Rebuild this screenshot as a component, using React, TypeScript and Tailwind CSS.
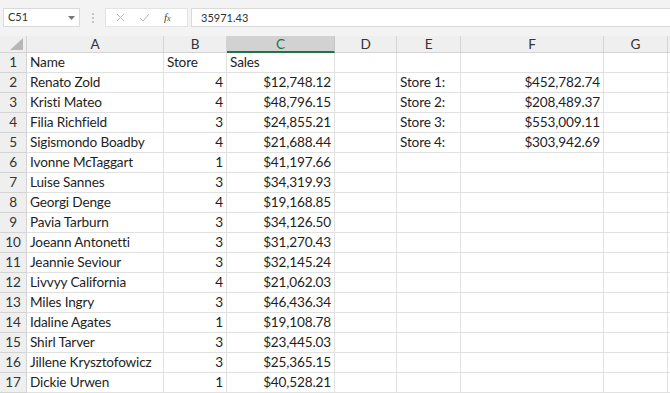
import React from 'react';

const rows: [string, number, string][] = [
  ['Renato Zold', 4, '$12,748.12'],
  ['Kristi Mateo', 4, '$48,796.15'],
  ['Filia Richfield', 3, '$24,855.21'],
  ['Sigismondo Boadby', 4, '$21,688.44'],
  ['Ivonne McTaggart', 1, '$41,197.66'],
  ['Luise Sannes', 3, '$34,319.93'],
  ['Georgi Denge', 4, '$19,168.85'],
  ['Pavia Tarburn', 3, '$34,126.50'],
  ['Joeann Antonetti', 3, '$31,270.43'],
  ['Jeannie Seviour', 3, '$32,145.24'],
  ['Livvyy California', 4, '$21,062.03'],
  ['Miles Ingry', 3, '$46,436.34'],
  ['Idaline Agates', 1, '$19,108.78'],
  ['Shirl Tarver', 3, '$23,445.03'],
  ['Jillene Krysztofowicz', 3, '$25,365.15'],
  ['Dickie Urwen', 1, '$40,528.21'],
];

const totals: Record<number, [string, string]> = {
  2: ['Store 1:', '$452,782.74'],
  3: ['Store 2:', '$208,489.37'],
  4: ['Store 3:', '$553,009.11'],
  5: ['Store 4:', '$303,942.69'],
};

const cols = ['A', 'B', 'C', 'D', 'E', 'F', 'G'];
const gridCols = 'grid grid-cols-[27px_137px_63px_108px_62px_64px_143px_64px_1fr]';

function Cell({ children, right }: { children?: React.ReactNode; right?: boolean }) {
  return (
    <div
      className={`h-5 border-r border-b border-[#e1e1e1] px-[3px] leading-[19px] whitespace-nowrap overflow-hidden ${
        right ? 'text-right' : ''
      }`}
    >
      {children}
    </div>
  );
}

function RowHead({ n }: { n: number }) {
  return (
    <div className="h-5 bg-[#efefef] border-r border-b border-[#d4d4d4] text-center leading-[19px] text-[#333]">
      {n}
    </div>
  );
}

export default function App() {
  return (
    <div
      className="w-[670px] h-[393px] overflow-hidden bg-white text-[13.6px] tracking-[-0.15px] text-[#1e1e1e]"
      style={{ fontFamily: 'Lato, "Open Sans", sans-serif' }}
    >
      {/* formula bar */}
      <div className="h-9 bg-[#f3f3f3] flex items-start pt-2 pl-[3px] gap-0 tracking-normal">
        <div className="w-[77px] h-[19px] bg-white border border-[#dadada] flex items-center justify-between pl-[4px] pr-[4px] text-[11px] text-[#333]">
          <span>C51</span>
          <svg width="7" height="4" viewBox="0 0 7 4">
            <path d="M0 0h7L3.5 4z" fill="#777" />
          </svg>
        </div>
        <div className="w-[25px] h-[19px] flex flex-col items-center justify-center gap-[2px]">
          <span className="w-[2px] h-[2px] bg-[#c4c4c4]" />
          <span className="w-[2px] h-[2px] bg-[#c4c4c4]" />
          <span className="w-[2px] h-[2px] bg-[#c4c4c4]" />
        </div>
        <div className="w-[83px] h-[19px] bg-white border border-[#e3e3e3] flex items-center pl-[10px] gap-[14px]">
          <svg width="9" height="9" viewBox="0 0 9 9">
            <path d="M1 1l7 7M8 1l-7 7" stroke="#b9b9b9" strokeWidth="1" />
          </svg>
          <svg width="11" height="9" viewBox="0 0 11 9">
            <path d="M1 5l3 3 6-7" stroke="#b9b9b9" strokeWidth="1" fill="none" />
          </svg>
          <span className="text-[11px] italic text-[#444]" style={{ fontFamily: '"Liberation Serif", serif' }}>
            f<span className="text-[8px]">x</span>
          </span>
        </div>
        <div className="flex-1 ml-[3px] h-[19px] bg-white border-y border-l border-[#dadada] pl-[9px] text-[11px] leading-[17px] text-[#333]">
          35971.43
        </div>
      </div>

      {/* column headers */}
      <div className={gridCols}>
        <div className="h-[17px] bg-[#efefef] border-r border-b border-[#d4d4d4] relative">
          <svg className="absolute right-[3px] bottom-[2px]" width="13" height="12" viewBox="0 0 13 12">
            <path d="M13 0v12H0z" fill="#b7b7b7" />
          </svg>
        </div>
        {cols.map((c) => (
          <div
            key={c}
            className={`h-[17px] text-center leading-[16px] ${
              c === 'C'
                ? 'bg-[#d2d2d2] text-[#217346] border-b-2 border-b-[#217346] border-r border-r-[#c6c6c6]'
                : 'bg-[#efefef] text-[#333] border-b border-r border-[#d4d4d4]'
            }`}
          >
            {c}
          </div>
        ))}
        <div className="h-[17px] bg-[#efefef] border-b border-[#d4d4d4]" />
      </div>

      {/* body */}
      <div className={gridCols}>
        <RowHead n={1} />
        <Cell>Name</Cell>
        <Cell>Store</Cell>
        <Cell>Sales</Cell>
        <Cell />
        <Cell />
        <Cell />
        <Cell />
        <Cell />
        {rows.map(([name, store, sales], i) => {
          const n = i + 2;
          const t = totals[n];
          return (
            <React.Fragment key={n}>
              <RowHead n={n} />
              <Cell>{name}</Cell>
              <Cell right>{store}</Cell>
              <Cell right>{sales}</Cell>
              <Cell />
              <Cell>{t ? t[0] : null}</Cell>
              <Cell right>{t ? t[1] : null}</Cell>
              <Cell />
              <Cell />
            </React.Fragment>
          );
        })}
      </div>
    </div>
  );
}
